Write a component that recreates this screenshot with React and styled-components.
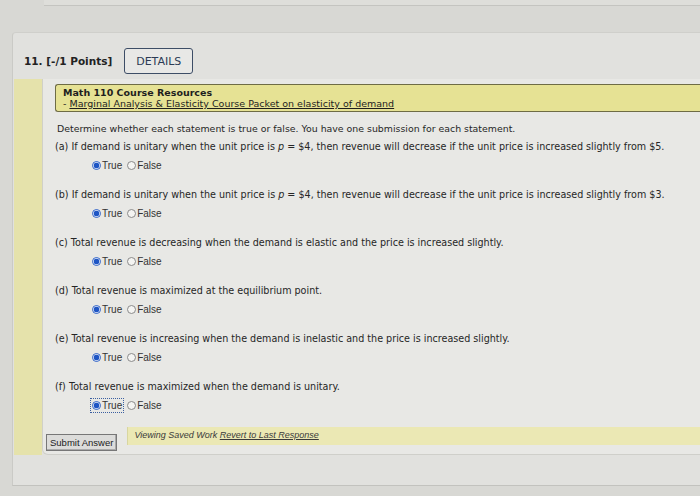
import React from "react"
import styled, { createGlobalStyle } from "styled-components"

const Global = createGlobalStyle`
  html, body {
    margin: 0;
    padding: 0;
    background: #d8d8d4;
  }
  body {
    width: 700px;
    height: 496px;
    overflow: hidden;
    font-family: "DejaVu Sans", Verdana, sans-serif;
  }
`

const statements = [
  { label: "(a)", text: <>If demand is unitary when the unit price is <i>p</i> = $4, then revenue will decrease if the unit price is increased slightly from $5.</> },
  { label: "(b)", text: <>If demand is unitary when the unit price is <i>p</i> = $4, then revenue will decrease if the unit price is increased slightly from $3.</> },
  { label: "(c)", text: "Total revenue is decreasing when the demand is elastic and the price is increased slightly." },
  { label: "(d)", text: "Total revenue is maximized at the equilibrium point." },
  { label: "(e)", text: "Total revenue is increasing when the demand is inelastic and the price is increased slightly." },
  { label: "(f)", text: "Total revenue is maximized when the demand is unitary.", focused: true },
]

export default function App() {
  return (
    <Page>
      <Global />
      <TopStrip />
      <Card>
        <Header>
          <Points>11. [-/1 Points]</Points>
          <DetailsButton>DETAILS</DetailsButton>
        </Header>
        <Body>
          <Strip />
          <Content>
            <Banner>
              <BannerTitle>Math 110 Course Resources</BannerTitle>
              <BannerLink>
                - <u>Marginal Analysis &amp; Elasticity Course Packet on elasticity of demand</u>
              </BannerLink>
            </Banner>
            <Instructions>
              Determine whether each statement is true or false. You have one submission for each statement.
            </Instructions>
            {statements.map((s) => (
              <Statement key={s.label}>
                <StatementText>
                  {s.label} {s.text}
                </StatementText>
                <Choices>
                  <Choice $focused={s.focused}>
                    <Radio $checked />
                    True
                  </Choice>
                  <Choice>
                    <Radio />
                    False
                  </Choice>
                </Choices>
              </Statement>
            ))}
            <SubmitRow>
              <SubmitButton>Submit Answer</SubmitButton>
              <SavedNote>
                Viewing Saved Work <u>Revert to Last Response</u>
              </SavedNote>
            </SubmitRow>
          </Content>
        </Body>
      </Card>
    </Page>
  )
}

let Page = styled.div`
  width: 700px;
  height: 496px;
  display: flex;
  flex-direction: column;
`

let TopStrip = styled.div`
  height: 5px;
  margin-left: 44px;
  border-bottom: 1px solid #c4c4c0;
  background: #dededa;
  margin-bottom: 26px;
`

let Card = styled.div`
  margin-left: 12px;
  height: 452px;
  background: #e1e1de;
  border-top: 1px solid #cfcfcb;
  border-left: 1px solid #cacac6;
  border-bottom: 1px solid #c2c2be;
  border-top-left-radius: 4px;
  display: flex;
  flex-direction: column;
`

let Header = styled.div`
  display: flex;
  align-items: center;
  gap: 12px;
  padding: 15px 0 5px 11px;
`

let Points = styled.div`
  font-weight: bold;
  font-size: 10.5px;
  color: #222;
`

let DetailsButton = styled.div`
  width: 67px;
  height: 24px;
  border: 1.5px solid #3d4d66;
  border-radius: 3px;
  display: flex;
  align-items: center;
  justify-content: center;
  font-size: 11px;
  color: #2c3b55;
  background: #e8e8e6;
`

let Body = styled.div`
  display: flex;
  height: 376px;
`

let Strip = styled.div`
  width: 28px;
  margin-left: 1px;
  background: #e5e2ab;
`

let Content = styled.div`
  flex: 1;
  background: #e8e8e5;
  border-left: 1px solid #d0d0c8;
  border-bottom: 1px solid #cfcfca;
  border-bottom-left-radius: 6px;
  padding: 5px 0 0 0;
  display: flex;
  flex-direction: column;
`

let Banner = styled.div`
  margin-left: 12px;
  background: #e6e294;
  border: 1px solid #6e6c45;
  border-right: none;
  border-radius: 3px 0 0 3px;
  padding: 2px 8px 2px 7px;
  font-size: 9.5px;
  color: #1e1e1e;
  line-height: 11px;
`

let BannerTitle = styled.div`
  font-weight: bold;
`

let BannerLink = styled.div``

let Instructions = styled.div`
  margin: 11px 0 0 14px;
  font-size: 9.4px;
  color: #262626;
`

let Statement = styled.div`
  margin: 7px 0 10px 12px;
  display: flex;
  flex-direction: column;
  gap: 7px;
`

let StatementText = styled.div`
  font-size: 9.6px;
  color: #262626;
  white-space: nowrap;
`

let Choices = styled.div`
  display: flex;
  gap: 3px;
  padding-left: 36px;
`

let Choice = styled.label`
  display: flex;
  align-items: center;
  gap: 1px;
  font-family: "Liberation Sans", Arial, sans-serif;
  font-size: 10px;
  color: #333;
  padding: 1px;
  outline: ${(p) => (p.$focused ? "1px dotted #3b5fa0" : "none")};
`

let Radio = styled.span`
  width: 9px;
  height: 9px;
  border-radius: 50%;
  box-sizing: border-box;
  border: 1px solid ${(p) => (p.$checked ? "#2f62c8" : "#8a8a8a")};
  background: ${(p) =>
    p.$checked
      ? "radial-gradient(circle, #1e55c4 0, #1e55c4 2.6px, #ffffff 3.2px)"
      : "#f4f4f2"};
`

let SubmitRow = styled.div`
  display: flex;
  align-items: flex-start;
  gap: 10px;
  margin: 5px 0 0 3px;
`

let SubmitButton = styled.div`
  margin-top: 7px;
  font-family: "Liberation Sans", Arial, sans-serif;
  font-size: 9.5px;
  color: #222;
  background: #dcdcda;
  border: 1px solid #777;
  box-shadow: inset -1px -1px 0 #aaa;
  padding: 2px 3px;
`

let SavedNote = styled.div`
  flex: 1;
  background: #ebe8b4;
  padding: 3px 6px 5px;
  font-family: "Liberation Sans", Arial, sans-serif;
  font-style: italic;
  font-size: 9px;
  color: #3a3a3a;
  border-left: 1px solid #d8d6a0;
`
